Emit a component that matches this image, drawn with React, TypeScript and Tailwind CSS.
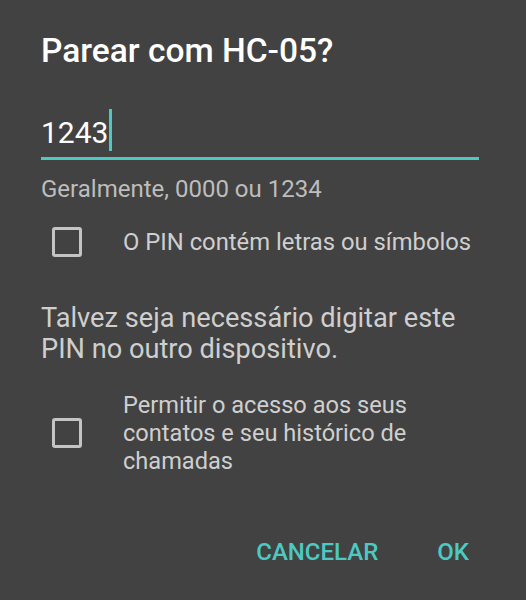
const teal = 'text-[#4ccac2]';

function CheckBox() {
  return <div className="h-[30px] w-[30px] shrink-0 rounded-[3px] border-[3px] border-[#c4c4c4]" />;
}

export default function App() {
  return (
    <div className="flex h-[600px] w-[526px] flex-col bg-[#424242] px-[41px] font-['Roboto',sans-serif]">
      {/* Title */}
      <h1 className="mt-[35px] text-[33.5px] font-medium leading-[32px] text-white">Parear com HC-05?</h1>

      {/* PIN input */}
      <div className="mt-[42px] flex h-[48px] items-start">
        <span className="text-[30px] leading-[48px] text-white">1243</span>
        <span className="ml-px h-[42px] w-[3px] bg-[#4ccac2]" />
      </div>
      <div className="h-[3px] w-[438px] bg-[#4ccac2]" />

      <p className="mt-[15px] text-[24px] leading-[28px] text-[#bdbdbd]">Geralmente, 0000 ou 1234</p>

      {/* Checkbox: letters */}
      <label className="mt-[24px] flex items-center">
        <span className="ml-[11px]">
          <CheckBox />
        </span>
        <span className="ml-[41px] text-[23.8px] leading-[30px] text-[#cfcfcf]">O PIN contém letras ou símbolos</span>
      </label>

      <p className="mt-[46px] text-[27.2px] leading-[31px] text-[#cfcfcf]">
        Talvez seja necessário digitar este
        <br />
        PIN no outro dispositivo.
      </p>

      {/* Checkbox: contacts */}
      <label className="mt-[26px] flex items-center">
        <span className="ml-[11px]">
          <CheckBox />
        </span>
        <span className="ml-[41px] w-[300px] text-[23.6px] leading-[28px] text-[#cfcfcf]">
          Permitir o acesso aos seus contatos e seu histórico de chamadas
        </span>
      </label>

      {/* Actions */}
      <div className="mt-auto mb-[34px] flex justify-end gap-[59px] pr-[16px] text-[24px] font-medium leading-[28px]">
        <button className={teal}>CANCELAR</button>
        <button className={teal}>OK</button>
      </div>
    </div>
  );
}
